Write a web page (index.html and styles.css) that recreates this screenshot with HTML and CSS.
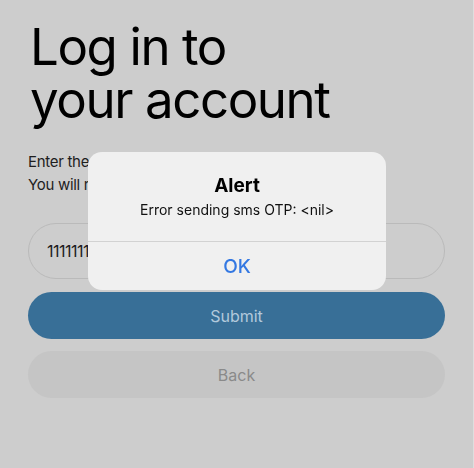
FILE: index.html
```html
<!DOCTYPE html>
<html lang="en">
<head>
  <meta charset="UTF-8">
  <meta name="viewport" content="width=device-width, initial-scale=1.0">
  <title>Log in</title>
  <link rel="stylesheet" href="styles.css">
</head>
<body>
  <div class="screen">
    <h1 class="title">
      <span class="title-line">Log in to</span>
      <span class="title-line">your account</span>
    </h1>
    <p class="subtitle">Enter the phone number for your account.<br>You will receive a code.</p>

    <div class="field">
      <span class="field-value">1111111</span>
    </div>

    <div class="actions">
      <button class="btn btn-primary">Submit</button>
      <button class="btn btn-secondary">Back</button>
    </div>
  </div>

  <!-- modal alert, drawn over the dimmed screen -->
  <div class="overlay">
    <div class="alert">
      <div class="alert-body">
        <h2>Alert</h2>
        <p>Error sending sms OTP: &lt;nil&gt;</p>
      </div>
      <button class="alert-btn">OK</button>
    </div>
  </div>
</body>
</html>
```

FILE: styles.css
```css
body {
  margin: 0;
  padding: 0;
  background: #cdcdcd;
  font-family: 'Inter', 'Noto Sans', sans-serif;
  color: #000;
  min-height: 100vh;
  overflow: hidden;
}
.screen {
  padding: 20px 28px 0;
  box-sizing: border-box;
  min-height: 100vh;
  border-right: 1px solid #dedede;
}
.title {
  margin: 0;
  font-size: 51px;
  font-weight: 400;
  letter-spacing: -1.4px;
  color: #000;
  padding-left: 2px;
}
.title-line {
  display: block;
  height: 53px;
  line-height: 53px;
}
.subtitle {
  margin: 24px 0 0;
  font-size: 15px;
  line-height: 23px;
  color: #1e1e1e;
  letter-spacing: -0.3px;
}
.field {
  margin-top: 27px;
  height: 56px;
  box-sizing: border-box;
  border: 1px solid #bababa;
  border-radius: 28px;
  display: flex;
  align-items: center;
  padding: 0 18px;
}
.field-value {
  font-size: 16px;
  color: #1c1c1c;
  letter-spacing: -0.5px;
}
.actions {
  display: flex;
  flex-direction: column;
  gap: 12px;
  margin-top: 13px;
}
.btn {
  height: 47px;
  border: none;
  border-radius: 24px;
  font-family: inherit;
  font-size: 16px;
  width: 100%;
}
.btn-primary {
  background: #386f97;
  color: #b2c9dc;
}
.btn-secondary {
  background: #c5c5c5;
  color: #8a8a8a;
}
.overlay {
  position: fixed;
  inset: 0;
  display: flex;
  justify-content: center;
  align-items: flex-start;
  padding-top: 152px;
}
.alert {
  width: 298px;
  background: #f0f0f0;
  border-radius: 14px;
  overflow: hidden;
  text-align: center;
}
.alert-body {
  padding: 22px 16px 23px;
  border-bottom: 1px solid #d2d2d2;
}
.alert-body h2 {
  margin: 0;
  font-size: 19px;
  line-height: 23px;
  font-weight: 700;
}
.alert-body p {
  margin: 4px 0 0;
  font-size: 14px;
  line-height: 17px;
  color: #111;
}
.alert-btn {
  display: block;
  width: 100%;
  height: 48px;
  border: none;
  background: transparent;
  font-family: inherit;
  font-size: 19px;
  font-weight: 500;
  color: #3478e2;
}
```
